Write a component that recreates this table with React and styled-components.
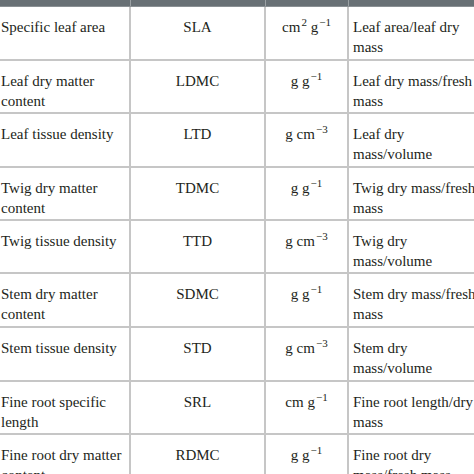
import React from 'react';
import styled, { createGlobalStyle } from 'styled-components';

const GlobalStyle = createGlobalStyle`
  html, body {
    margin: 0;
    padding: 0;
    background: #ffffff;
    overflow: hidden;
  }
`;

const Page = styled.div`
  width: 474px;
  height: 474px;
  overflow: hidden;
  font-family: "Liberation Serif", "Times New Roman", serif;
  color: #231f20;
`;

const Table = styled.div`
  width: 500px;
  display: flex;
  flex-direction: column;
`;

const HeaderBar = styled.div`
  display: grid;
  grid-template-columns: 131px 135px 83px 1fr;
  height: 6px;
  background: #687075;
  border-bottom: 1px solid #8a9094;
`;

const HeaderCell = styled.div`
  border-right: 1px solid #9aa0a3;
`;

const Row = styled.div`
  display: grid;
  grid-template-columns: 131px 135px 83px 1fr;
  height: ${p => p.$h}px;
  border-bottom: 2px solid #c6c6c6;
  box-sizing: border-box;
`;

const Cell = styled.div`
  box-sizing: border-box;
  padding: 10px 0 0 ${p => p.$pl}px;
  text-align: ${p => p.$align || 'left'};
  font-size: 15px;
  line-height: 20px;
  border-right: 2px solid #c6c6c6;
  white-space: nowrap;
  overflow: hidden;
`;

const Sup = styled.sup`
  font-size: 11px;
  line-height: 0;
  vertical-align: 6px;
  margin-left: 1px;
`;

const rows = [
  { name: ['Specific leaf area'], abbr: 'SLA', unit: ['cm', '2', ' g', '−1'], def: ['Leaf area/leaf dry', 'mass'] },
  { name: ['Leaf dry matter', 'content'], abbr: 'LDMC', unit: ['g g', '−1'], def: ['Leaf dry mass/fresh', 'mass'] },
  { name: ['Leaf tissue density'], abbr: 'LTD', unit: ['g cm', '−3'], def: ['Leaf dry', 'mass/volume'] },
  { name: ['Twig dry matter', 'content'], abbr: 'TDMC', unit: ['g g', '−1'], def: ['Twig dry mass/fresh', 'mass'] },
  { name: ['Twig tissue density'], abbr: 'TTD', unit: ['g cm', '−3'], def: ['Twig dry', 'mass/volume'] },
  { name: ['Stem dry matter', 'content'], abbr: 'SDMC', unit: ['g g', '−1'], def: ['Stem dry mass/fresh', 'mass'] },
  { name: ['Stem tissue density'], abbr: 'STD', unit: ['g cm', '−3'], def: ['Stem dry', 'mass/volume'] },
  { name: ['Fine root specific', 'length'], abbr: 'SRL', unit: ['cm g', '−1'], def: ['Fine root length/dry', 'mass'] },
  { name: ['Fine root dry matter', 'content'], abbr: 'RDMC', unit: ['g g', '−1'], def: ['Fine root dry', 'mass/fresh mass'] },
];

const heights = [54, 53, 54, 53, 53, 54, 54, 53, 60];

function Lines({ lines }) {
  return lines.map((l, i) => (
    <React.Fragment key={i}>
      {i > 0 && <br />}
      {l}
    </React.Fragment>
  ));
}

function Unit({ parts }) {
  // parts alternate: base text, superscript, base text, superscript
  return parts.map((p, i) => (i % 2 === 1 ? <Sup key={i}>{p}</Sup> : <span key={i}>{p}</span>));
}

export default function App() {
  return (
    <Page>
      <GlobalStyle />
      <Table>
        <HeaderBar>
          <HeaderCell />
          <HeaderCell />
          <HeaderCell />
          <div />
        </HeaderBar>
        {rows.map((r, i) => (
          <Row key={r.abbr} $h={heights[i]}>
            <Cell $pl={1}>
              <Lines lines={r.name} />
            </Cell>
            <Cell $align="center" $pl={0}>{r.abbr}</Cell>
            <Cell $align="center" $pl={0}>
              <Unit parts={r.unit} />
            </Cell>
            <Cell $pl={4}>
              <Lines lines={r.def} />
            </Cell>
          </Row>
        ))}
      </Table>
    </Page>
  );
}
